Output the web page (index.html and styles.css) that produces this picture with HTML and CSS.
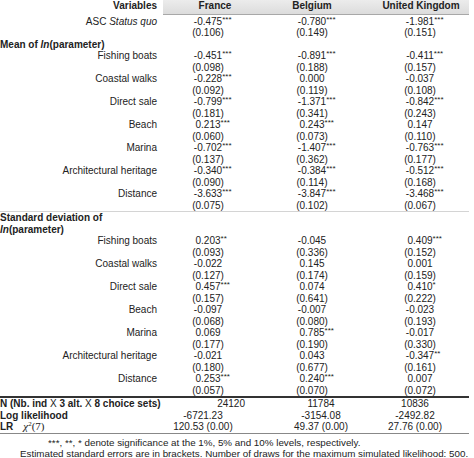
FILE: index.html
```html
<!DOCTYPE html>
<html>
<head>
<meta charset="utf-8">
<link rel="stylesheet" href="styles.css">
</head>
<body>
<div class="table">
  <div class="row head">
    <div class="lab">Variables</div>
    <div class="c hb fr">France</div>
    <div class="c hb">Belgium</div>
    <div class="c hb uk">United Kingdom</div>
  </div>

  <div class="block b1">
    <div class="row"><div class="lab">ASC <i>Status quo</i></div><div class="c">-0.475<span class="st">***</span></div><div class="c">-0.780<span class="st">***</span></div><div class="c">-1.981<span class="st">***</span></div></div>
    <div class="row"><div class="lab"></div><div class="c">(0.106)</div><div class="c">(0.149)</div><div class="c">(0.151)</div></div>
    <div class="row"><div class="sec">Mean of <i>ln</i>(parameter)</div></div>
    <div class="row"><div class="lab">Fishing boats</div><div class="c">-0.451<span class="st">***</span></div><div class="c">-0.891<span class="st">***</span></div><div class="c">-0.411<span class="st">***</span></div></div>
    <div class="row"><div class="lab"></div><div class="c">(0.098)</div><div class="c">(0.188)</div><div class="c">(0.157)</div></div>
    <div class="row"><div class="lab">Coastal walks</div><div class="c">-0.228<span class="st">***</span></div><div class="c">0.000</div><div class="c">-0.037</div></div>
    <div class="row"><div class="lab"></div><div class="c">(0.092)</div><div class="c">(0.119)</div><div class="c">(0.108)</div></div>
    <div class="row"><div class="lab">Direct sale</div><div class="c">-0.799<span class="st">***</span></div><div class="c">-1.371<span class="st">***</span></div><div class="c">-0.842<span class="st">***</span></div></div>
    <div class="row"><div class="lab"></div><div class="c">(0.181)</div><div class="c">(0.341)</div><div class="c">(0.243)</div></div>
    <div class="row"><div class="lab">Beach</div><div class="c">0.213<span class="st">***</span></div><div class="c">0.243<span class="st">***</span></div><div class="c">0.147</div></div>
    <div class="row"><div class="lab"></div><div class="c">(0.060)</div><div class="c">(0.073)</div><div class="c">(0.110)</div></div>
    <div class="row"><div class="lab">Marina</div><div class="c">-0.702<span class="st">***</span></div><div class="c">-1.407<span class="st">***</span></div><div class="c">-0.763<span class="st">***</span></div></div>
    <div class="row"><div class="lab"></div><div class="c">(0.137)</div><div class="c">(0.362)</div><div class="c">(0.177)</div></div>
    <div class="row"><div class="lab">Architectural heritage</div><div class="c">-0.340<span class="st">***</span></div><div class="c">-0.384<span class="st">***</span></div><div class="c">-0.512<span class="st">***</span></div></div>
    <div class="row"><div class="lab"></div><div class="c">(0.090)</div><div class="c">(0.114)</div><div class="c">(0.168)</div></div>
    <div class="row"><div class="lab">Distance</div><div class="c">-3.633<span class="st">***</span></div><div class="c">-3.847<span class="st">***</span></div><div class="c">-3.468<span class="st">***</span></div></div>
    <div class="row"><div class="lab"></div><div class="c">(0.075)</div><div class="c">(0.102)</div><div class="c">(0.067)</div></div>
  </div>

  <div class="block b2">
    <div class="row"><div class="sec">Standard deviation of</div></div>
    <div class="row"><div class="sec"><i>ln</i>(parameter)</div></div>
    <div class="row"><div class="lab">Fishing boats</div><div class="c">0.203<span class="st">**</span></div><div class="c">-0.045</div><div class="c">0.409<span class="st">***</span></div></div>
    <div class="row"><div class="lab"></div><div class="c">(0.093)</div><div class="c">(0.336)</div><div class="c">(0.152)</div></div>
    <div class="row"><div class="lab">Coastal walks</div><div class="c">-0.022</div><div class="c">0.145</div><div class="c">0.001</div></div>
    <div class="row"><div class="lab"></div><div class="c">(0.127)</div><div class="c">(0.174)</div><div class="c">(0.159)</div></div>
    <div class="row"><div class="lab">Direct sale</div><div class="c">0.457<span class="st">***</span></div><div class="c">0.074</div><div class="c">0.410<span class="st">*</span></div></div>
    <div class="row"><div class="lab"></div><div class="c">(0.157)</div><div class="c">(0.641)</div><div class="c">(0.222)</div></div>
    <div class="row"><div class="lab">Beach</div><div class="c">-0.097</div><div class="c">-0.007</div><div class="c">-0.023</div></div>
    <div class="row"><div class="lab"></div><div class="c">(0.068)</div><div class="c">(0.080)</div><div class="c">(0.193)</div></div>
    <div class="row"><div class="lab">Marina</div><div class="c">0.069</div><div class="c">0.785<span class="st">***</span></div><div class="c">-0.017</div></div>
    <div class="row"><div class="lab"></div><div class="c">(0.177)</div><div class="c">(0.190)</div><div class="c">(0.330)</div></div>
    <div class="row"><div class="lab">Architectural heritage</div><div class="c">-0.021</div><div class="c">0.043</div><div class="c">-0.347<span class="st">**</span></div></div>
    <div class="row"><div class="lab"></div><div class="c">(0.180)</div><div class="c">(0.677)</div><div class="c">(0.161)</div></div>
    <div class="row"><div class="lab">Distance</div><div class="c">0.253<span class="st">***</span></div><div class="c">0.240<span class="st">***</span></div><div class="c">0.007</div></div>
    <div class="row"><div class="lab"></div><div class="c">(0.057)</div><div class="c">(0.070)</div><div class="c">(0.072)</div></div>
  </div>

  <div class="block b3">
    <div class="row"><div class="blab">N (Nb. ind <span class="n">X</span> 3 alt. <span class="n">X</span> 8 choice sets)</div><div class="c f n1">24120</div><div class="c be">11784</div><div class="c ukb">10836</div></div>
    <div class="row"><div class="blab">Log likelihood</div><div class="c f">-6721.23</div><div class="c be">-3154.08</div><div class="c ukb">-2492.82</div></div>
    <div class="row"><div class="blab">LR<span class="chi"><i>χ</i><sup>2</sup>(7)</span></div><div class="c f">120.53 (0.00)</div><div class="c be">49.37 (0.00)</div><div class="c ukb">27.76 (0.00)</div></div>
  </div>

  <div class="notes">
    <div class="note n1l">***, **, * denote significance at the 1%, 5% and 10% levels, respectively.</div>
    <div class="note n2l">Estimated standard errors are in brackets. Number of draws for the maximum simulated likelihood: 500.</div>
  </div>
</div>
</body>
</html>
```

FILE: styles.css
```css
body {
  margin: 0;
  background: #fff;
  font-family: "Liberation Sans", Arial, sans-serif;
  font-size: 10px;
  color: #222;
}

.table {
  width: 469px;
}

.row {
  display: grid;
  grid-template-columns: 163px 90px 118px 98px;
  height: 11.5px;
  line-height: 11.5px;
}

.lab {
  text-align: right;
  padding-right: 6px;
  white-space: nowrap;
}

.c {
  text-align: center;
  white-space: nowrap;
}

.st {
  display: inline-block;
  width: 0;
  font-size: 8px;
  line-height: 0;
  vertical-align: 3px;
  white-space: nowrap;
}

.sec {
  grid-column: 1 / -1;
  font-weight: bold;
  white-space: nowrap;
}

.head {
  height: 15px;
  line-height: 12px;
}

.head .lab,
.head .c {
  font-weight: bold;
}

.hb {
  background: linear-gradient(#ececec, #dcdcdc);
  border-bottom: 1px solid #a8a8a8;
}

.hb.fr {
  padding-left: 14px;
}

.hb.uk {
  padding-left: 2px;
}

.b1 {
  padding-top: 0.5px;
  border-bottom: 1px solid #d4d4d4;
}

.b2 {
  border-bottom: 2px solid #333;
}

.b3 {
  border-bottom: 1px solid #888;
}

.blab {
  font-weight: bold;
  white-space: nowrap;
}

.blab .n {
  font-weight: normal;
}

.chi {
  font-family: "Liberation Serif", "Times New Roman", serif;
  font-weight: normal;
  font-size: 11px;
  margin-left: 10px;
}

.chi sup {
  font-size: 7px;
  line-height: 0;
  vertical-align: 4px;
}

.c.f {
  padding-right: 10px;
}

.c.f.n1 {
  text-align: right;
  padding-right: 8px;
}

.c.be {
  padding-left: 18px;
}

.c.ukb {
  padding-right: 10px;
}

.notes {
  padding-top: 3px;
  font-size: 9.8px;
}

.note {
  line-height: 11.5px;
  white-space: nowrap;
}

.n1l {
  padding-left: 48px;
}

.n2l {
  padding-left: 20px;
}
```
